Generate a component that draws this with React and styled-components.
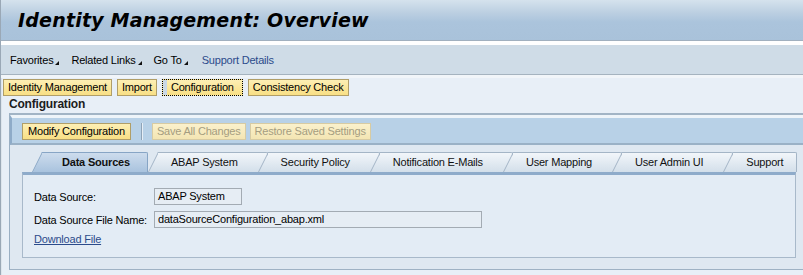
import styled, { createGlobalStyle } from "styled-components";

const Global = createGlobalStyle`
  html, body { margin: 0; padding: 0; }
  body {
    background: #e8eff7;
    font-family: "Liberation Sans", Arial, sans-serif;
    overflow: hidden;
  }
`;

const Page = styled.div`
  width: 803px;
  height: 275px;
  box-sizing: border-box;
  border-left: 1px solid #9aa8b6;
  box-shadow: inset 1px 0 0 #dde5ec;
  background: #e8eff7;
  font-size: 11px;
  letter-spacing: -0.2px;
  color: #000;
`;

const Header = styled.div`
  height: 40px;
  display: flex;
  align-items: center;
  padding-left: 17px;
  background: linear-gradient(#d5e2ed 0px, #bdd0e2 12px, #abc4dc 22px, #a9c2da 40px);
  border-bottom: 1px solid #a1b0bf;
`;

const Title = styled.h1`
  margin: 0;
  font-family: "DejaVu Sans", Verdana, sans-serif;
  font-size: 19px;
  font-weight: bold;
  font-style: italic;
  letter-spacing: 0.2px;
  color: #000;
`;

const Menu = styled.div`
  height: 29px;
  display: flex;
  align-items: center;
  gap: 12px;
  padding-left: 9px;
  border-top: 4px solid #ffffff;
  border-bottom: 1px solid #a5b3bf;
  background: #cfdce7;
`;

const MenuItem = styled.span`
  display: inline-flex;
  align-items: flex-end;
  color: ${(p) => (p.$link ? "#2b4b8b" : "#000")};
  margin-left: ${(p) => (p.$link ? "2px" : "0")};
`;

const Caret = styled.span`
  width: 0;
  height: 0;
  margin: 0 0 1px 2px;
  border-left: 4px solid transparent;
  border-bottom: 4px solid #111;
`;

const Nav = styled.div`
  display: flex;
  gap: 5px;
  padding: 1px 0 0 2px;
  border-top: 3px solid #f1f5f9;
`;

const Button = styled.button`
  height: 17px;
  box-sizing: border-box;
  padding: 0 ${(p) => p.$pad || 4}px;
  margin: 0;
  font-family: "Liberation Sans", Arial, sans-serif;
  font-size: 11px;
  letter-spacing: -0.2px;
  line-height: 15px;
  color: ${(p) => (p.$disabled ? "#a59d80" : "#000")};
  background: ${(p) =>
    p.$disabled
      ? "linear-gradient(#fbf1cc, #f3e5b3)"
      : "linear-gradient(#fdefb4, #f8df85)"};
  border: 1px ${(p) => (p.$focused ? "dotted #000" : "solid")}
    ${(p) => (p.$focused ? "" : p.$disabled ? "#d7cba3" : "#b09e68")};
  box-shadow: ${(p) => (p.$focused ? "inset 4px 0 0 #c9d8e6" : "none")};
  cursor: default;
`;

const SectionTitle = styled.div`
  height: 17px;
  line-height: 17px;
  padding-left: 8px;
  font-size: 12px;
  font-weight: bold;
  color: #1c1c1c;
`;

const Panel = styled.div`
  margin-left: 8px;
  border-top: 2px solid #a2b4c5;
  border-left: 1px solid #9aafc3;
  border-bottom: 1px solid #9fb2c4;
  background: #dfe8f1;
`;

const PanelBar = styled.div`
  height: 30px;
  display: flex;
  align-items: flex-start;
  gap: 4px;
  padding: 5px 0 0 10px;
  box-sizing: border-box;
  border-top: 3px solid #eef4f9;
  border-left: 2px solid #8eabc8;
  border-bottom: 2px solid #9ab1c6;
  background: #b8d1e7;
`;

const Separator = styled.span`
  width: 1px;
  height: 17px;
  margin: 0 6px;
  background: #8ea3b7;
  box-shadow: 1px 0 0 #e6eef6;
`;

const PanelBody = styled.div`
  padding: 7px 7px 11px 12px;
`;

const TabStrip = styled.div`
  display: flex;
  height: 20px;
  padding-left: 10px;
`;

const Tab = styled.div`
  position: relative;
  z-index: ${(p) => (p.$active ? 20 : p.$z)};
  height: 20px;
  display: flex;
  align-items: center;
  padding: 0 ${(p) => p.$right}px 0 ${(p) => p.$left}px;
  font-weight: ${(p) => (p.$active ? "bold" : "normal")};
  color: #111;
  white-space: nowrap;

  &::before,
  &::after {
    content: "";
    position: absolute;
    z-index: -1;
    top: 0;
    bottom: 0;
    box-sizing: border-box;
    background: ${(p) =>
      p.$active
        ? "linear-gradient(#cddced, #a9c3de)"
        : "linear-gradient(#f2f6fa, #d3dfea)"};
    border-top: 1px solid ${(p) => (p.$active ? "#87a5c5" : "#a4b5c6")};
  }

  &::before {
    left: 0;
    width: 18px;
    transform-origin: bottom left;
    transform: skewX(-26.57deg);
    border-left: 1px solid ${(p) => (p.$active ? "#87a5c5" : "#a4b5c6")};
  }

  &::after {
    left: 10px;
    right: ${(p) => (p.$extend ? "-10px" : "0")};
    border-right: 1px solid ${(p) => (p.$active ? "#87a5c5" : "#a4b5c6")};
    border-top-right-radius: 2px;
  }
`;

const TabContent = styled.div`
  height: 86px;
  box-sizing: border-box;
  padding: 13px 11px;
  border: 1px solid #a8b9ca;
  border-top: 3px solid #8eabca;
  background: #e3ecf5;
  display: flex;
  flex-direction: column;
  gap: 6px;
`;

const FormRow = styled.div`
  display: flex;
  align-items: center;
`;

const Label = styled.span`
  width: 120px;
`;

const Field = styled.span`
  width: ${(p) => p.$w}px;
  height: 17px;
  box-sizing: border-box;
  padding-left: 3px;
  line-height: 15px;
  border: 1px solid #a3abb3;
  background: #e6edf4;
`;

const Link = styled.a`
  color: #2b4b8b;
  text-decoration: underline;
  line-height: 11px;
`;

const tabs = [
  { label: "Data Sources", active: true },
  { label: "ABAP System" },
  { label: "Security Policy" },
  { label: "Notification E-Mails" },
  { label: "User Mapping" },
  { label: "User Admin UI" },
  { label: "Support", last: true },
];

export default function App() {
  return (
    <>
      <Global />
      <Page>
        <Header>
          <Title>Identity Management: Overview</Title>
        </Header>
        <Menu>
          <MenuItem>Favorites<Caret /></MenuItem>
          <MenuItem>Related Links<Caret /></MenuItem>
          <MenuItem>Go To<Caret /></MenuItem>
          <MenuItem $link>Support Details</MenuItem>
        </Menu>
        <Nav>
          <Button>Identity Management</Button>
          <Button>Import</Button>
          <Button $focused $pad={8}>Configuration</Button>
          <Button>Consistency Check</Button>
        </Nav>
        <SectionTitle>Configuration</SectionTitle>
        <Panel>
          <PanelBar>
            <Button $pad={5}>Modify Configuration</Button>
            <Separator />
            <Button $disabled>Save All Changes</Button>
            <Button $disabled>Restore Saved Settings</Button>
          </PanelBar>
          <PanelBody>
            <TabStrip>
              {tabs.map((t, i) => (
                <Tab
                  key={t.label}
                  $z={i + 1}
                  $active={t.active}
                  $extend={!t.active && !t.last}
                  $left={t.active ? 30 : 23}
                  $right={t.active ? 18 : t.last ? 14 : 20}
                >
                  {t.label}
                </Tab>
              ))}
            </TabStrip>
            <TabContent>
              <FormRow>
                <Label>Data Source:</Label>
                <Field $w={88}>ABAP System</Field>
              </FormRow>
              <FormRow>
                <Label>Data Source File Name:</Label>
                <Field $w={328}>dataSourceConfiguration_abap.xml</Field>
              </FormRow>
              <Link href="#">Download File</Link>
            </TabContent>
          </PanelBody>
        </Panel>
      </Page>
    </>
  );
}
